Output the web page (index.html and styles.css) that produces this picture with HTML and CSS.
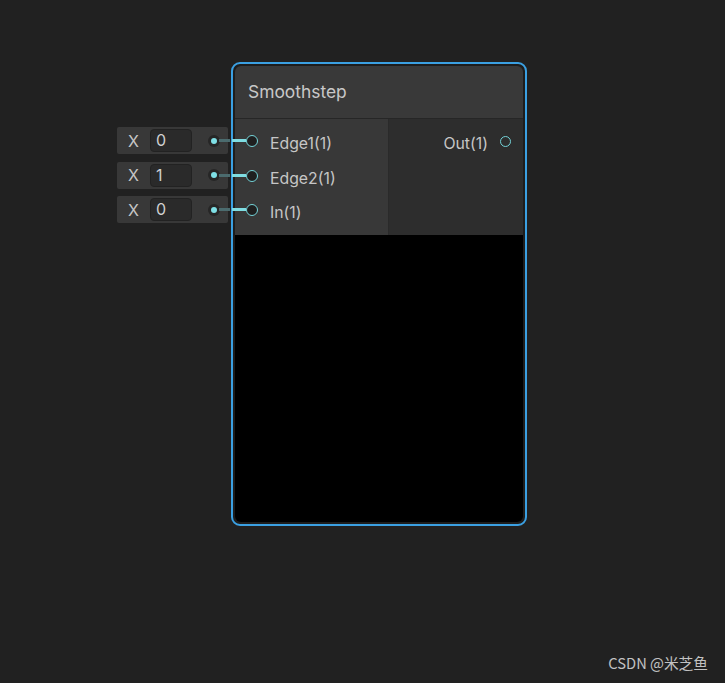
FILE: index.html
```html
<!DOCTYPE html>
<html>
<head>
<meta charset="utf-8">
<link rel="stylesheet" href="styles.css">
</head>
<body>
<div class="canvas">
  <div class="node">
    <div class="node-inner">
      <div class="header">Smoothstep</div>
      <div class="ports">
        <div class="inputs">
          <div class="port-row"><span class="port-circle in"></span><span class="port-label">Edge1(1)</span></div>
          <div class="port-row"><span class="port-circle in"></span><span class="port-label">Edge2(1)</span></div>
          <div class="port-row"><span class="port-circle in"></span><span class="port-label">In(1)</span></div>
        </div>
        <div class="outputs">
          <div class="port-row out-row"><span class="port-label">Out(1)</span><span class="port-circle out"></span></div>
        </div>
      </div>
      <div class="preview"></div>
    </div>
  </div>

  <div class="inline-inputs">
    <div class="inline-row">
      <span class="axis">X</span><span class="field">0</span><span class="dot-wrap"><span class="dot"></span></span>
      <span class="wire-dim"></span><span class="wire-bright"></span>
    </div>
    <div class="inline-row">
      <span class="axis">X</span><span class="field">1</span><span class="dot-wrap"><span class="dot"></span></span>
      <span class="wire-dim"></span><span class="wire-bright"></span>
    </div>
    <div class="inline-row">
      <span class="axis">X</span><span class="field">0</span><span class="dot-wrap"><span class="dot"></span></span>
      <span class="wire-dim"></span><span class="wire-bright"></span>
    </div>
  </div>

  <div class="watermark">CSDN @米芝鱼</div>
</div>
</body>
</html>
```

FILE: styles.css
```css
html, body {
  margin: 0;
  padding: 0;
  background: #212121;
}
body {
  width: 725px;
  height: 683px;
  overflow: hidden;
  font-family: Inter, "Noto Sans", sans-serif;
}
.canvas {
  position: relative;
  width: 725px;
  height: 683px;
}

/* node */
.node {
  position: absolute;
  left: 231px;
  top: 62px;
  width: 288px;
  border: 2px solid #3ba0e2;
  border-radius: 9px;
  padding: 2px;
  background: #1d1d1d;
}
.node-inner {
  border-radius: 6px;
  overflow: hidden;
  display: flex;
  flex-direction: column;
}
.header {
  height: 53px;
  box-sizing: border-box;
  background: #393939;
  border-bottom: 1px solid #262626;
  color: #c8c8c8;
  font-size: 17.4px;
  padding-left: 13px;
  display: flex;
  align-items: center;
  padding-bottom: 1px;
}
.ports {
  display: flex;
  height: 116px;
}
.inputs {
  width: 154px;
  box-sizing: border-box;
  background: #383838;
  border-right: 1px solid #2a2a2a;
  padding-top: 5px;
}
.outputs {
  flex: 1;
  background: #2d2d2d;
  padding-top: 5px;
}
.port-row {
  height: 34.5px;
  display: flex;
  align-items: center;
  padding-left: 11px;
  gap: 12px;
}
.out-row {
  justify-content: flex-end;
  padding-left: 0;
  padding-right: 12px;
}
.port-label {
  color: #c6c6c6;
  font-size: 15.8px;
  padding-top: 5px;
}
.port-circle {
  width: 12px;
  height: 12px;
  box-sizing: border-box;
  border-radius: 50%;
  border: 1.5px solid #74d3d8;
  flex: none;
}
.port-circle.in {
  background: #1f1f1f;
}
.port-circle.out {
  background: transparent;
  width: 11px;
  height: 11px;
}
.preview {
  height: 287px;
  background: #000;
}

/* inline value inputs */
.inline-inputs {
  position: absolute;
  left: 117px;
  top: 127px;
  display: flex;
  flex-direction: column;
  gap: 7.5px;
}
.inline-row {
  position: relative;
  width: 111px;
  height: 27px;
  background: #383838;
  border-radius: 2px;
  display: flex;
  align-items: center;
}
.axis {
  width: 33px;
  text-align: center;
  color: #c6c6c6;
  font-size: 16px;
}
.field {
  width: 42px;
  height: 23px;
  box-sizing: border-box;
  background: #2a2a2a;
  border: 1px solid #222;
  border-radius: 4px;
  color: #d0d0d0;
  font-size: 16px;
  padding-left: 5px;
  line-height: 21px;
}
.dot-wrap {
  margin-left: 16px;
  width: 12px;
  height: 12px;
  border-radius: 50%;
  background: #262626;
  display: flex;
  align-items: center;
  justify-content: center;
}
.dot {
  width: 6px;
  height: 6px;
  border-radius: 50%;
  background: #7fe0e6;
}
.wire-dim {
  position: absolute;
  left: 102px;
  top: 12px;
  width: 11px;
  height: 3px;
  background: #4b6b6e;
}
.wire-bright {
  position: absolute;
  left: 115px;
  top: 12px;
  width: 14px;
  height: 3px;
  background: #7fdde2;
}

.watermark {
  position: absolute;
  right: 17px;
  bottom: 10px;
  font-family: "Noto Sans CJK SC", "Noto Sans", sans-serif;
  font-size: 14.7px;
  color: #c2c2c2;
}
```
